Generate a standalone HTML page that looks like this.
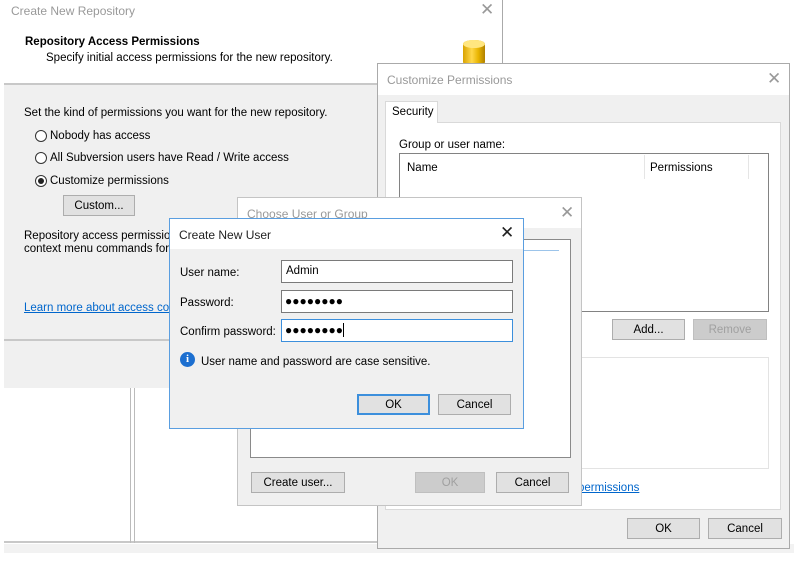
<!DOCTYPE html>
<html><head><meta charset="utf-8"><style>
*{box-sizing:border-box;margin:0;padding:0}
body{width:800px;height:561px;background:#fff;position:relative;overflow:hidden;font-family:"Liberation Sans",sans-serif;font-size:11.5px;color:#000}
.a{position:absolute}
.t{position:absolute;white-space:nowrap;margin-top:1px}
.btn{position:absolute;background:#e1e1e1;border:1px solid #adadad;text-align:center;line-height:20px;font-size:11.5px}
.dis{color:#a0a0a0;background:#cccccc;border-color:#bfbfbf}
.x{position:absolute;font-size:17px;color:#999;line-height:1;font-weight:300}
.radio{position:absolute;width:12px;height:12px;border:1px solid #333;border-radius:50%;background:#fff}
.inp{position:absolute;background:#fff;border:1px solid #7a7a7a}
a{color:#0066cc;text-decoration:underline}
</style></head><body>

<div class="a" style="left:4px;top:0;width:499px;height:84px;background:#fff;border-right:1px solid #aaa"></div>
<div class="t" style="left:11px;top:3px;font-size:12px;color:#999">Create New Repository</div>
<div class="x" style="left:480px;top:1px">✕</div>
<div class="t" style="left:25px;top:35px;font-weight:bold">Repository Access Permissions</div>
<div class="t" style="left:46px;top:51px">Specify initial access permissions for the new repository.</div>
<div class="a" style="left:463px;top:40px;width:22px;height:26px;background:linear-gradient(90deg,#d9a300,#ffd84a 40%,#e8b400 70%,#b08000);border-radius:11px/4px"></div>
<div class="a" style="left:463px;top:40px;width:22px;height:8px;background:#ffe680;border-radius:50%"></div>
<div class="a" style="left:4px;top:83px;width:499px;height:305px;background:#f0f0f0;border-top:2px solid #c8c8c8"></div>
<div class="a" style="left:4px;top:339px;width:499px;height:2px;background:#c8c8c8"></div>
<div class="t" style="left:24px;top:106px">Set the kind of permissions you want for the new repository.</div>
<div class="radio" style="left:35px;top:130px"></div><div class="t" style="left:50px;top:129px">Nobody has access</div>
<div class="radio" style="left:35px;top:152px"></div><div class="t" style="left:50px;top:151px">All Subversion users have Read / Write access</div>
<div class="radio" style="left:35px;top:175px"></div><div class="a" style="left:38px;top:178px;width:6px;height:6px;border-radius:50%;background:#222"></div>
<div class="t" style="left:50px;top:174px">Customize permissions</div>
<div class="btn" style="left:63px;top:195px;width:72px;height:21px">Custom...</div>
<div class="t" style="left:24px;top:229px;line-height:13px">Repository access permissions<br>context menu commands for th</div>
<div class="t" style="left:24px;top:301px"><a>Learn more about access cont</a></div>
<div class="a" style="left:4px;top:388px;width:400px;height:155px;border-bottom:2px solid #c8c8c8"></div>
<div class="a" style="left:130px;top:388px;width:5px;height:155px;border-left:1px solid #bbb;border-right:1px solid #bbb"></div>
<div class="a" style="left:4px;top:544px;width:790px;height:9px;background:#f2f2f2"></div>

<div class="a" style="left:377px;top:63px;width:413px;height:486px;background:#f0f0f0;border:1px solid #aaa"></div>
<div class="a" style="left:378px;top:64px;width:411px;height:31px;background:#fff"></div>
<div class="t" style="left:387px;top:72px;font-size:12px;color:#999">Customize Permissions</div>
<div class="x" style="left:767px;top:70px">✕</div>
<div class="a" style="left:385px;top:122px;width:396px;height:388px;background:#fff;border:1px solid #d9d9d9"></div>
<div class="a" style="left:385px;top:101px;width:53px;height:22px;background:#fff;border:1px solid #d9d9d9;border-bottom:none"></div>
<div class="t" style="left:392px;top:105px">Security</div>
<div class="t" style="left:399px;top:138px">Group or user name:</div>
<div class="a" style="left:399px;top:153px;width:370px;height:159px;border:1px solid #828282;background:#fff"></div>
<div class="t" style="left:407px;top:161px">Name</div>
<div class="a" style="left:644px;top:155px;width:1px;height:24px;background:#e5e5e5"></div>
<div class="a" style="left:748px;top:155px;width:1px;height:24px;background:#e5e5e5"></div>
<div class="t" style="left:650px;top:161px">Permissions</div>
<div class="btn" style="left:612px;top:319px;width:73px;height:21px">Add...</div>
<div class="btn dis" style="left:693px;top:319px;width:74px;height:21px">Remove</div>
<div class="a" style="left:560px;top:357px;width:209px;height:112px;border:1px solid #e3e3e3"></div>
<div class="t" style="left:578px;top:481px"><a>permissions</a></div>
<div class="btn" style="left:627px;top:518px;width:73px;height:21px">OK</div>
<div class="btn" style="left:708px;top:518px;width:74px;height:21px">Cancel</div>

<div class="a" style="left:237px;top:197px;width:345px;height:309px;background:#f0f0f0;border:1px solid #c4c4c4"></div>
<div class="a" style="left:238px;top:198px;width:343px;height:30px;background:#fff"></div>
<div class="t" style="left:247px;top:206px;font-size:12px;color:#999">Choose User or Group</div>
<div class="x" style="left:560px;top:204px">✕</div>
<div class="a" style="left:250px;top:239px;width:321px;height:219px;background:#fff;border:1px solid #8a8a8a"></div>
<div class="a" style="left:500px;top:250px;width:59px;height:1px;background:#9cc4ea"></div>
<div class="btn" style="left:251px;top:472px;width:94px;height:21px">Create user...</div>
<div class="btn dis" style="left:415px;top:472px;width:70px;height:21px">OK</div>
<div class="btn" style="left:496px;top:472px;width:73px;height:21px">Cancel</div>

<div class="a" style="left:169px;top:218px;width:355px;height:211px;background:#f0f0f0;border:1px solid #5a9ee0"></div>
<div class="a" style="left:170px;top:219px;width:353px;height:30px;background:#fff"></div>
<div class="t" style="left:179px;top:227px;font-size:12px;color:#222">Create New User</div>
<div class="x" style="left:500px;top:224px;color:#222">✕</div>
<div class="t" style="left:180px;top:266px">User name:</div>
<div class="t" style="left:180px;top:296px">Password:</div>
<div class="t" style="left:180px;top:325px">Confirm password:</div>
<div class="inp" style="left:281px;top:260px;width:232px;height:23px"></div>
<div class="t" style="left:286px;top:264px">Admin</div>
<div class="inp" style="left:281px;top:290px;width:232px;height:23px"></div>
<div class="t" style="left:285px;top:293px;font-size:12px;letter-spacing:0">●●●●●●●●</div>
<div class="inp" style="left:281px;top:319px;width:232px;height:23px;border-color:#3c8fdc"></div>
<div class="t" style="left:285px;top:322px;font-size:12px;letter-spacing:0">●●●●●●●●</div>
<div class="a" style="left:343px;top:323px;width:1px;height:14px;background:#000"></div>
<div class="a" style="left:180px;top:352px;width:15px;height:15px;border-radius:50%;background:#1c6fd0;color:#fff;font-weight:bold;font-size:11px;text-align:center;line-height:15px;font-family:'Liberation Serif',serif">i</div>
<div class="t" style="left:201px;top:355px">User name and password are case sensitive.</div>
<div class="btn" style="left:357px;top:394px;width:73px;height:21px;border:2px solid #3c8fdc;line-height:18px">OK</div>
<div class="btn" style="left:438px;top:394px;width:73px;height:21px">Cancel</div>
</body></html>
